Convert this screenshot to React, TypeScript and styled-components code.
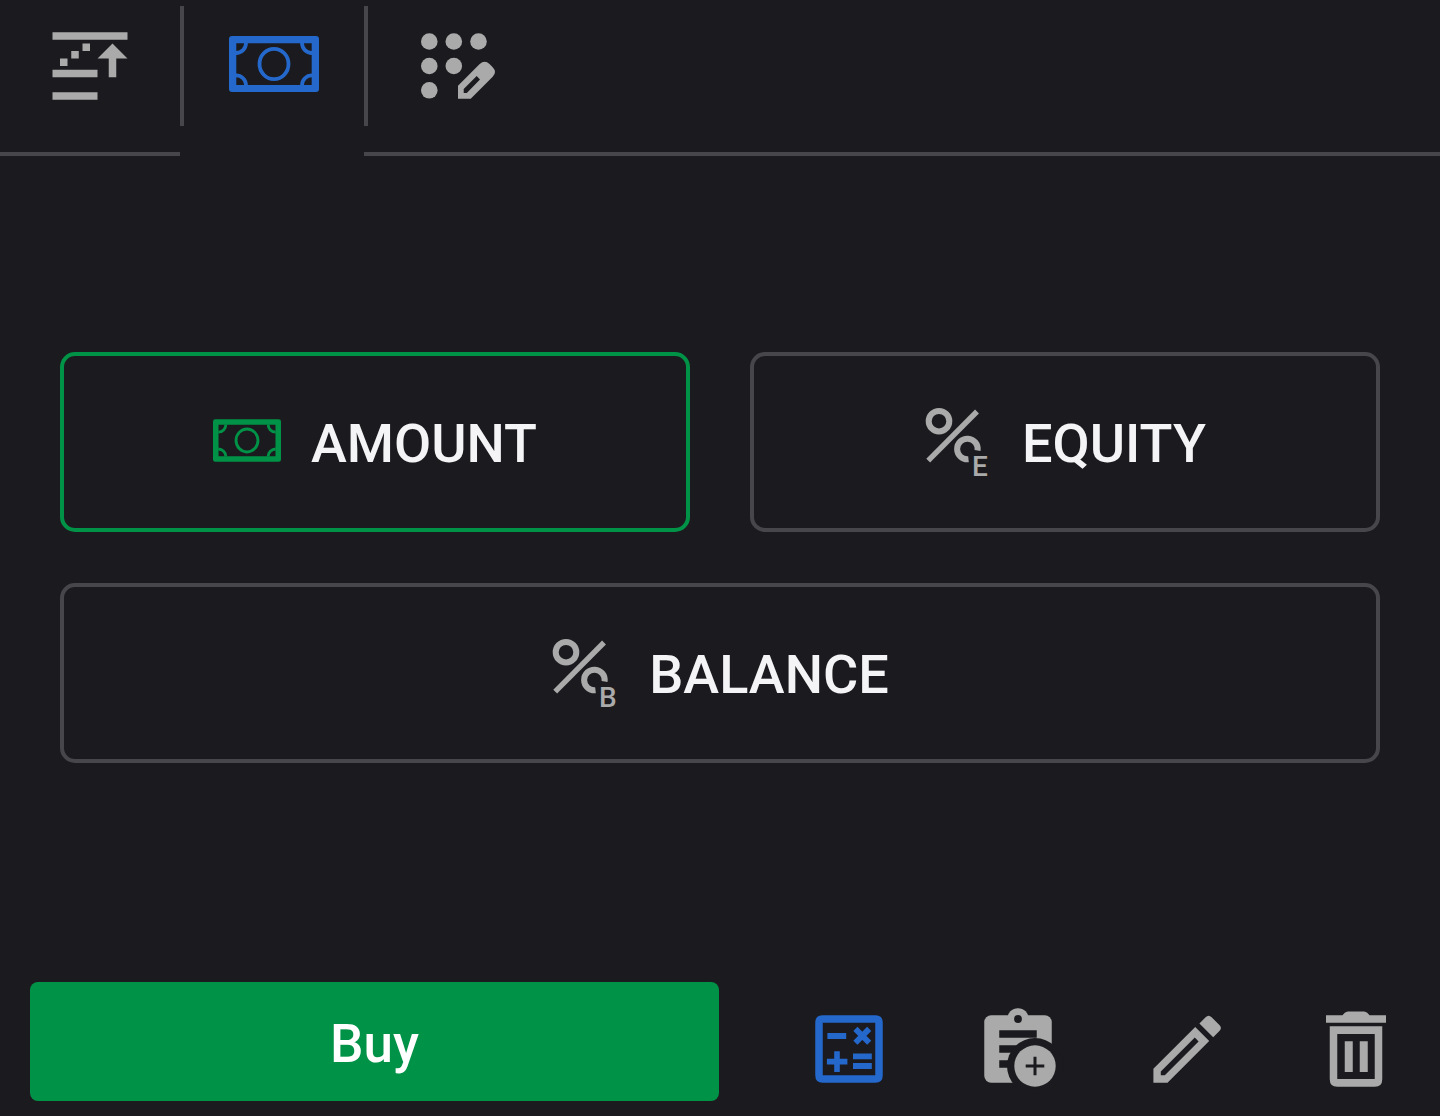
import React, { useState } from "react";
import styled, { createGlobalStyle } from "styled-components";

const color = {
  background: "#1b1b1f",
  line: "#46464b",
  icon: "#aaaaaa",
  text: "#f4f4f6",
  blue: "#2468cc",
  green: "#009246",
};

const GlobalStyle = createGlobalStyle`
  *, *::before, *::after { box-sizing: border-box; }
  body {
    margin: 0;
    background: ${color.background};
    font-family: Roboto, "Liberation Sans", sans-serif;
  }
  button {
    margin: 0;
    padding: 0;
    border: 0;
    background: none;
    font: inherit;
    cursor: pointer;
  }
`;

const Page = styled.div`
  display: flex;
  flex-direction: column;
  min-height: 100vh;
  color: ${color.text};
`;

const TabBar = styled.nav`
  display: flex;
`;

const TabCell = styled.div<{ $active: boolean }>`
  padding: 6px 0 26px;
  border-bottom: 4px solid ${(p) => (p.$active ? "transparent" : color.line)};
`;

const TabButton = styled.button<{ $active: boolean; $divided: boolean }>`
  display: flex;
  align-items: center;
  justify-content: center;
  box-sizing: content-box;
  width: 180px;
  height: 120px;
  border-left: ${(p) => (p.$divided ? `4px solid ${color.line}` : "0")};
  color: ${(p) => (p.$active ? color.blue : color.icon)};
`;

const TabRest = styled.div`
  flex: 1;
  border-bottom: 4px solid ${color.line};
`;

const Icon = styled.svg<{ $size: number }>`
  display: block;
  flex: none;
  width: ${(p) => p.$size}px;
  height: ${(p) => p.$size}px;
  overflow: visible;
  fill: currentColor;
`;

const Main = styled.main`
  flex: 1;
  display: grid;
  grid-template-columns: 1fr 1fr;
  gap: 51px 60px;
  align-content: center;
  padding: 24px 60px;
`;

const Option = styled.button<{ $selected: boolean; $wide?: boolean }>`
  display: flex;
  align-items: center;
  justify-content: center;
  gap: 30px;
  height: 180px;
  grid-column: ${(p) => (p.$wide ? "1 / -1" : "auto")};
  border: 4px solid ${(p) => (p.$selected ? color.green : color.line)};
  border-radius: 15px;
  color: ${(p) => (p.$selected ? color.green : color.icon)};
`;

const OptionLabel = styled.span`
  padding-top: 4px;
  color: ${color.text};
  font-size: 54px;
  font-weight: 500;
  line-height: 60px;
`;

const Footer = styled.footer`
  display: flex;
  gap: 45px;
  padding: 23px 0 0 30px;
`;

const BuyButton = styled.button`
  flex: 1;
  height: 119px;
  margin-bottom: 15px;
  padding-top: 4px;
  border-radius: 8px;
  background: ${color.green};
  color: #ffffff;
  font-size: 53px;
  font-weight: 500;
  line-height: 60px;
`;

const Actions = styled.div`
  display: grid;
  grid-template-columns: repeat(4, 169px);
`;

const ActionButton = styled.button<{ $active?: boolean }>`
  display: flex;
  align-items: center;
  justify-content: center;
  color: ${(p) => (p.$active ? color.blue : color.icon)};
`;

const DepthIcon = () => (
  <Icon $size={90} viewBox="0 0 90 90" aria-hidden="true">
    <path d="M7.5 11.25h75v7.5h-75zM7.5 48.75h45v7.5h-45zM7.5 71.25h45v7.5h-45z" />
    <path d="M15 37.5h7.5v7.5H15zM26.25 30h7.5v7.5h-7.5zM37.5 22.5H45V30h-7.5z" />
    <path d="M67.5 22.5 82.5 37.5H71.25V56.25h-7.5V37.5H52.5z" />
  </Icon>
);

const CashIcon = ({ size }: { size: number }) => (
  <Icon $size={size} viewBox="0 0 90 90" aria-hidden="true">
    <path
      fillRule="evenodd"
      d="M3 15H87Q90 15 90 18V68Q90 71 87 71H3Q0 71 0 68V18Q0 15 3 15ZM7.3 22.3V64H82.7V22.3Z"
    />
    <g fill="none" stroke="currentColor" strokeWidth="3.8">
      <ellipse cx="45" cy="43" rx="14.5" ry="15.2" />
      <path d="M17 22A10 10 0 0 1 7 32M73 22A10 10 0 0 0 83 32M17 64.3A10 10 0 0 0 7 54.3M73 64.3A10 10 0 0 1 83 54.3" />
    </g>
  </Icon>
);

const dots = [
  [16.3, 20.5], [40.8, 20.5], [65.5, 20.5],
  [16.3, 45], [40.8, 45],
  [16.3, 69.3],
];

const KeypadEditIcon = () => (
  <Icon $size={90} viewBox="0 0 90 90" aria-hidden="true">
    {dots.map(([x, y]) => (
      <circle key={`${x}-${y}`} cx={x} cy={y} r="8.3" />
    ))}
    <path
      fillRule="evenodd"
      d="M45 77.7V64.7L66.7 43Q71.7 38.5 76.5 43L79.7 46.2Q84.3 51 79.7 55.7L57.7 77.7ZM50.7 72H53.8L67 58.5 63.7 55 50.7 68Z"
    />
  </Icon>
);

const PercentIcon = ({ letter }: { letter: string }) => (
  <Icon $size={68} viewBox="0 0 68 68" aria-hidden="true">
    <g fill="none" stroke="currentColor">
      <circle cx="15" cy="13.2" r="10.3" strokeWidth="6" />
      <path d="M4.2 52.7 53 3.5" strokeWidth="5.4" />
      <path d="M53.6 42.5A10.3 10.3 0 1 0 44.5 51.2" strokeWidth="6" />
    </g>
    <text x="48" y="68" fontSize="28" fontWeight="500" fontFamily="Roboto, sans-serif">
      {letter}
    </text>
  </Icon>
);

const CalculatorIcon = () => (
  <Icon $size={90} viewBox="0 0 90 90" aria-hidden="true">
    <path
      fillRule="evenodd"
      d="M18.75 11.25H71.25Q78.75 11.25 78.75 18.75V71.25Q78.75 78.75 71.25 78.75H18.75Q11.25 78.75 11.25 71.25V18.75Q11.25 11.25 18.75 11.25ZM18.75 18.75V71.25H71.25V18.75Z"
    />
    <path d="M23.4 28.9H42.2V34.9H23.4ZM49 49.4H67.8V55.2H49ZM49 59.1H67.8V64.9H49ZM30.2 47.2H35.8V54.8H43.4V60.4H35.8V68H30.2V60.4H22.9V54.8H30.2Z" />
    <path d="M51.4 24.9 65.2 38.7M65.2 24.9 51.4 38.7" stroke="currentColor" strokeWidth="5.8" />
  </Icon>
);

const ClipboardAddIcon = () => (
  <Icon $size={90} viewBox="0 0 90 90" aria-hidden="true">
    <rect x="11.25" y="11.25" width="67.5" height="67.5" rx="7" />
    <circle cx="45" cy="15" r="10.8" />
    <g fill={color.background}>
      <circle cx="45" cy="15" r="3.9" />
      <path d="M26.25 26.25H63.75V33.75H26.25ZM26.25 41.25H50V48.75H26.25ZM26.25 56.25H40V63.75H26.25Z" />
      <circle cx="62" cy="62" r="28" />
    </g>
    <circle cx="62" cy="62" r="20.7" />
    <path d="M52.7 62H71.3M62 52.7V71.3" stroke={color.background} strokeWidth="3" />
  </Icon>
);

const PencilIcon = () => (
  <Icon $size={90} viewBox="0 0 90 90" aria-hidden="true">
    <path
      fillRule="evenodd"
      d="M11.4 78.8V64.7L53.2 23 67.2 37 25.5 78.8ZM18.8 71.3H22.8L56.6 37.4 52.8 33.6 18.8 67.5Z"
    />
    <path d="M57.4 19.4 63.6 13.2Q66.6 10.2 69.6 13.2L77.4 21Q80.4 24 77.4 27L71.2 33.2Z" />
  </Icon>
);

const TrashIcon = () => (
  <Icon $size={90} viewBox="0 0 90 90" aria-hidden="true">
    <path d="M15 11.25H31.5L33.5 9Q35 7.5 37 7.5H53Q55 7.5 56.5 9L58.5 11.25H75V18.75H15Z" />
    <path
      fillRule="evenodd"
      d="M18.75 22.3H71.25V75.3Q71.25 82.8 63.75 82.8H26.25Q18.75 82.8 18.75 75.3ZM26.25 30V75H63.75V30Z"
    />
    <path d="M33.75 37.3H41.75V68H33.75ZM48.75 37.3H56.75V68H48.75Z" />
  </Icon>
);

const tabs = [
  { name: "Order book", icon: <DepthIcon /> },
  { name: "Cash size", icon: <CashIcon size={90} /> },
  { name: "Custom keypad", icon: <KeypadEditIcon /> },
];

const options = [
  { name: "AMOUNT", icon: <CashIcon size={68} />, wide: false },
  { name: "EQUITY", icon: <PercentIcon letter="E" />, wide: false },
  { name: "BALANCE", icon: <PercentIcon letter="B" />, wide: true },
];

export default function App() {
  const [tab, setTab] = useState(1);
  const [selected, setSelected] = useState("AMOUNT");

  return (
    <Page>
      <GlobalStyle />
      <TabBar>
        {tabs.map((t, i) => (
          <TabCell key={t.name} $active={tab === i}>
            <TabButton
              type="button"
              aria-label={t.name}
              aria-pressed={tab === i}
              $active={tab === i}
              $divided={i > 0}
              onClick={() => setTab(i)}
            >
              {t.icon}
            </TabButton>
          </TabCell>
        ))}
        <TabRest />
      </TabBar>
      <Main>
        {options.map((o) => (
          <Option
            key={o.name}
            type="button"
            aria-pressed={selected === o.name}
            $selected={selected === o.name}
            $wide={o.wide}
            onClick={() => setSelected(o.name)}
          >
            {o.icon}
            <OptionLabel>{o.name}</OptionLabel>
          </Option>
        ))}
      </Main>
      <Footer>
        <BuyButton type="button">Buy</BuyButton>
        <Actions>
          <ActionButton type="button" aria-label="Calculator" $active>
            <CalculatorIcon />
          </ActionButton>
          <ActionButton type="button" aria-label="Add to clipboard">
            <ClipboardAddIcon />
          </ActionButton>
          <ActionButton type="button" aria-label="Edit">
            <PencilIcon />
          </ActionButton>
          <ActionButton type="button" aria-label="Delete">
            <TrashIcon />
          </ActionButton>
        </Actions>
      </Footer>
    </Page>
  );
}
